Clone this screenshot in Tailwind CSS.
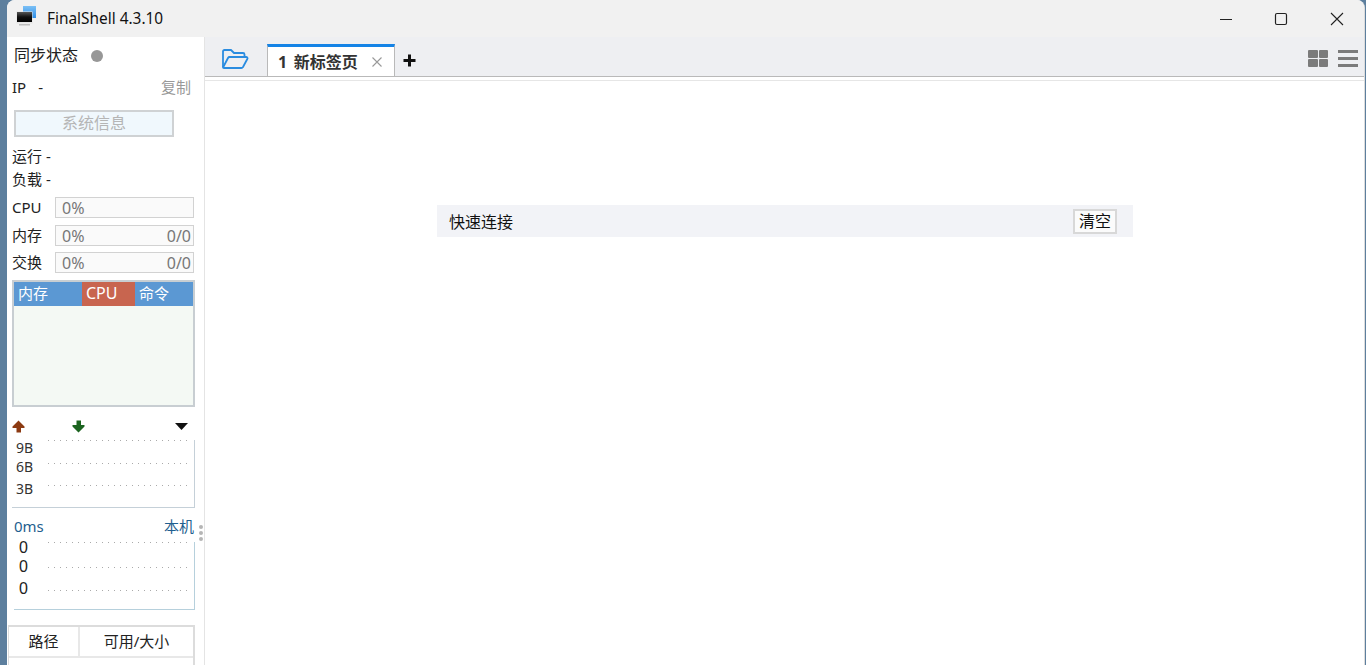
<!DOCTYPE html>
<html lang="en">
<head>
  <meta charset="UTF-8">
  <title>FinalShell</title>
  <script src="https://cdn.jsdelivr.net/npm/@tailwindcss/browser@4"></script>
</head>
<body class="h-[665px] w-[1366px] overflow-hidden bg-[#5d7f9e] font-['Noto_Sans','Noto_Sans_CJK_SC',sans-serif] text-[15px] text-[#222]">
  <div class="ml-[7px] flex h-[665px] w-[1358px] flex-col overflow-hidden rounded-t-[8px] border-r border-[#dcdcdc] bg-white">
    <!-- title bar -->
    <div class="flex h-[37px] shrink-0 items-center bg-[#f1f1f1]">
      <svg class="ml-[9px] mb-[7px]" width="22" height="21" viewBox="0 0 22 21">
        <defs>
          <linearGradient id="back" x1="0" y1="0" x2="0" y2="1"><stop offset="0" stop-color="#7cc0f5"/><stop offset="1" stop-color="#2f8fe8"/></linearGradient>
          <linearGradient id="front" x1="0" y1="0" x2="0" y2="1"><stop offset="0" stop-color="#555"/><stop offset="0.5" stop-color="#111"/><stop offset="1" stop-color="#000"/></linearGradient>
        </defs>
        <rect x="7" y="1" width="13" height="12" fill="url(#back)"/>
        <rect x="0.5" y="6.5" width="16" height="12" fill="#e4e4e4"/>
        <rect x="1" y="7" width="15" height="10" fill="url(#front)"/>
        <rect x="3" y="19" width="11" height="1.5" fill="#bdbdbd"/>
      </svg>
      <span class="ml-[9px] text-[15.4px] text-[#111]">FinalShell 4.3.10</span>
      <div class="ml-auto flex items-center pr-[6px]">
        <svg class="mr-[41px]" width="14" height="14" viewBox="0 0 14 14"><path d="M1 7.5H13" stroke="#222" stroke-width="1"/></svg>
        <svg class="mr-[42px]" width="14" height="14" viewBox="0 0 14 14"><rect x="1.5" y="1.5" width="11" height="11" rx="1.5" fill="none" stroke="#222" stroke-width="1.2"/></svg>
        <svg class="mr-[14px]" width="14" height="14" viewBox="0 0 14 14"><path d="M1 1L13 13M13 1L1 13" stroke="#222" stroke-width="1.1"/></svg>
      </div>
    </div>

    <div class="flex min-h-0 flex-1">
      <!-- sidebar -->
      <aside class="relative w-[198px] shrink-0 border-r border-[#e4e4e4] bg-white">
        <div class="flex h-[37px] items-center pb-[2px] pl-[7px]">
          <span class="text-[16px]">同步状态</span>
          <span class="ml-[13px] mt-[2px] h-[12px] w-[12px] rounded-full bg-[#979797]"></span>
        </div>
        <div class="mt-[3px] flex h-[20px] items-center justify-between pl-[5px] pr-[13px]">
          <span>IP<span class="ml-[12px]">-</span></span>
          <span class="text-[#999]">复制</span>
        </div>
        <div class="ml-[7px] mt-[13px] flex h-[27px] w-[160px] items-center justify-center border-2 border-[#cfd2d4] bg-[#f0f8fd] pb-[2px] text-[16px] text-[#b5b5b5]">系统信息</div>
        <div class="mt-[8px] h-[23px] pl-[5px] leading-[23px]">运行 -</div>
        <div class="h-[23px] pl-[5px] leading-[23px]">负载 -</div>
        <div class="mt-[6px] flex flex-col pl-[5px]">
          <div class="flex h-[21px] items-center">
            <span class="w-[43px]">CPU</span>
            <div class="flex h-[21px] w-[139px] items-center border border-[#d2d2d2] bg-[#fafafa] pl-[6px] text-[16px] text-[#777]">0%</div>
          </div>
          <div class="mt-[7px] flex h-[21px] items-center">
            <span class="w-[43px]">内存</span>
            <div class="flex h-[21px] w-[139px] items-center justify-between border border-[#d2d2d2] bg-[#fafafa] pl-[6px] pr-[2px] text-[16px] text-[#777]"><span>0%</span><span>0/0</span></div>
          </div>
          <div class="mt-[6px] flex h-[21px] items-center">
            <span class="w-[43px]">交换</span>
            <div class="flex h-[21px] w-[139px] items-center justify-between border border-[#d2d2d2] bg-[#fafafa] pl-[6px] pr-[2px] text-[16px] text-[#777]"><span>0%</span><span>0/0</span></div>
          </div>
        </div>
        <!-- process table -->
        <div class="ml-[5px] mt-[7px] h-[127px] w-[183px] border-2 border-[#c8ced2] bg-[#f4f9f4]">
          <div class="flex h-[24px] items-center text-[#fff]">
            <div class="flex h-full w-[68px] items-center bg-[#5b98d3] pb-[2px] pl-[4px]">内存</div>
            <div class="flex h-full w-[53px] items-center bg-[#c8654f] pb-[2px] pl-[4px] text-[16px]">CPU</div>
            <div class="flex h-full flex-1 items-center bg-[#5b98d3] pb-[2px] pl-[4px]">命令</div>
          </div>
        </div>
        <!-- network -->
        <div class="ml-[5px] mt-[13px] flex h-[13px] w-[176px] items-center">
          <svg width="13" height="13" viewBox="0 0 13 13"><path d="M6.5 0.5L12.5 6.5V8H9V12.5H4.5V8H0.5V6.5Z" fill="#8c3a12"/></svg>
          <svg class="ml-[47px]" width="13" height="13" viewBox="0 0 13 13"><path d="M6.5 12.5L12.5 6.5V5H9V0.5H4.5V5H0.5V6.5Z" fill="#1c6420"/></svg>
          <svg class="ml-auto" width="13" height="7" viewBox="0 0 13 7"><path d="M0 0H13L6.5 7Z" fill="#111"/></svg>
        </div>
        <div class="relative ml-[5px] mt-[7px] h-[68px] w-[183px] border-b border-r border-[#c5d0d8] text-[14px] text-[#333]">
          <div class="absolute left-[36px] right-[2px] top-0 h-px bg-[repeating-linear-gradient(90deg,#aaa_0,#aaa_1px,transparent_1px,transparent_6px)]"></div>
          <div class="absolute left-[36px] right-[2px] top-[23px] h-px bg-[repeating-linear-gradient(90deg,#aaa_0,#aaa_1px,transparent_1px,transparent_6px)]"></div>
          <div class="absolute left-[36px] right-[2px] top-[45px] h-px bg-[repeating-linear-gradient(90deg,#aaa_0,#aaa_1px,transparent_1px,transparent_6px)]"></div>
          <div class="absolute left-[4px] top-[-1px] leading-[18px]">9B</div>
          <div class="absolute left-[4px] top-[18px] leading-[18px]">6B</div>
          <div class="absolute left-[4px] top-[40px] leading-[18px]">3B</div>
        </div>
        <!-- ping -->
        <div class="ml-[7px] mt-[9px] flex h-[20px] w-[180px] items-center justify-between pb-[2px] text-[#1f5f8f]">
          <span>0ms</span><span>本机</span>
        </div>
        <div class="relative ml-[7px] mt-[5px] h-[68px] w-[181px] border-b border-r border-[#b6d0dc] font-['Liberation_Sans',sans-serif] text-[16px] text-[#222]">
          <div class="absolute left-[34px] right-[2px] top-0 h-px bg-[repeating-linear-gradient(90deg,#aaa_0,#aaa_1px,transparent_1px,transparent_6px)]"></div>
          <div class="absolute left-[34px] right-[2px] top-[25px] h-px bg-[repeating-linear-gradient(90deg,#aaa_0,#aaa_1px,transparent_1px,transparent_6px)]"></div>
          <div class="absolute left-[34px] right-[2px] top-[48px] h-px bg-[repeating-linear-gradient(90deg,#aaa_0,#aaa_1px,transparent_1px,transparent_6px)]"></div>
          <div class="absolute left-[5px] top-[-3px] leading-[18px]">0</div>
          <div class="absolute left-[5px] top-[16px] leading-[18px]">0</div>
          <div class="absolute left-[5px] top-[38px] leading-[18px]">0</div>
        </div>
        <!-- disk table -->
        <div class="ml-px mt-[15px] h-[60px] w-[187px] border-t-2 border-r-2 border-l border-[#dcdcdc]">
          <div class="flex h-[31px] border-b-2 border-[#e8e8e8]">
            <div class="flex w-[71px] items-center justify-center border-r-2 border-[#e8e8e8]">路径</div>
            <div class="flex flex-1 items-center justify-center">可用/大小</div>
          </div>
        </div>
        <!-- resize handle -->
        <div class="absolute left-[192px] top-[488px] flex flex-col gap-[2px]">
          <span class="h-[4px] w-[4px] rounded-full bg-[#b5b5b5]"></span>
          <span class="h-[4px] w-[4px] rounded-full bg-[#b5b5b5]"></span>
          <span class="h-[4px] w-[4px] rounded-full bg-[#b5b5b5]"></span>
        </div>
      </aside>

      <!-- main -->
      <main class="flex min-w-0 flex-1 flex-col">
        <div class="flex h-[40px] shrink-0 items-end border-b border-[#b9b9b9] bg-[#eeeff2]">
          <svg class="mb-[6px] ml-[16px]" width="28" height="22" viewBox="0 0 28 22" fill="none" stroke="#2a8ce0" stroke-width="1.8" stroke-linejoin="round">
            <path d="M2 19V3.5C2 2.5 2.5 2 3.5 2H10L13 5H22C23 5 23.5 5.5 23.5 6.5V9"/>
            <path d="M2 19.5L7 10C7.3 9.4 7.8 9 8.5 9H25C26.3 9 27 10 26.3 11L22 19C21.6 19.7 21 20 20.3 20H3C2.4 20 2 19.8 2 19.5Z"/>
          </svg>
          <div class="mb-[-1px] ml-[18px] flex h-[33px] w-[128px] items-center border-t-[3px] border-r border-b border-l border-t-[#1483e6] border-r-[#b9b9b9] border-b-[#b9b9b9] border-l-[#b9b9b9] bg-white">
            <span class="ml-[10px] text-[16px] font-bold text-[#333]">1</span>
            <span class="ml-[6.5px] text-[16px] font-bold text-[#333]">新标签页</span>
            <svg class="ml-[14.5px]" width="10" height="10" viewBox="0 0 10 10"><path d="M0.5 0.5L9.5 9.5M9.5 0.5L0.5 9.5" stroke="#999" stroke-width="1.1"/></svg>
          </div>
          <svg class="mb-[9px] ml-[8px]" width="13" height="13" viewBox="0 0 13 13"><path d="M6.5 0.5V12.5M0.5 6.5H12.5" stroke="#111" stroke-width="3"/></svg>
          <div class="mb-[9px] ml-auto flex items-center gap-[10px] pr-[6px]">
            <div class="grid h-[17px] w-[20px] grid-cols-2 gap-[1px]">
              <span class="rounded-[1px] bg-[#7b7b7b]"></span><span class="rounded-[1px] bg-[#7b7b7b]"></span>
              <span class="rounded-[1px] bg-[#7b7b7b]"></span><span class="rounded-[1px] bg-[#7b7b7b]"></span>
            </div>
            <div class="flex h-[17px] w-[20px] flex-col justify-between">
              <span class="h-[3px] bg-[#7b7b7b]"></span><span class="h-[3px] bg-[#7b7b7b]"></span><span class="h-[3px] bg-[#7b7b7b]"></span>
            </div>
          </div>
        </div>
        <div class="mt-[3px] flex-1 border-t border-[#e6e6e6] pt-[124px]">
          <div class="ml-[232px] flex h-[32px] w-[696px] items-center justify-between bg-[#f2f3f7] pl-[12px] pr-[16px]">
            <span class="mt-[2px] text-[16px] text-[#111]">快速连接</span>
            <button class="h-[25px] w-[44px] border-2 border-[#d8d8d8] bg-[#fbfbfb] text-[16px] leading-none text-[#111]">清空</button>
          </div>
        </div>
      </main>
    </div>
  </div>
</body>
</html>
